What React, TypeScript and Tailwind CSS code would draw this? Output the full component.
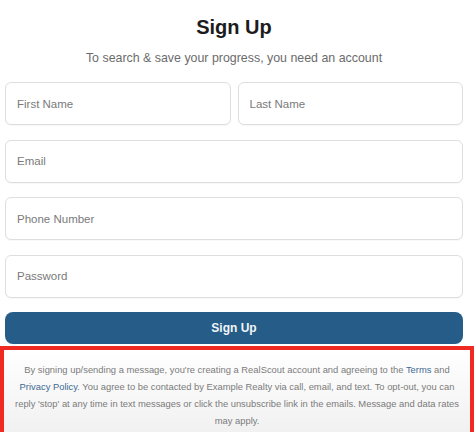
import React from 'react';

const fields = ['Email', 'Phone Number', 'Password'];

const Field: React.FC<{ label: string }> = ({ label }) => (
  <input
    placeholder={label}
    className="h-[43px] w-full rounded-[6px] border border-[#dedede] bg-white px-[11px] text-[11.5px] text-[#333] placeholder:text-[#7a7a7a] outline-none shadow-[0_1px_1px_rgba(0,0,0,0.03)]"
  />
);

const App: React.FC = () => {
  return (
    <div className="h-[432px] w-[474px] overflow-hidden bg-white font-['Liberation_Sans',Arial,sans-serif]">
      <div className="flex w-[458px] ml-[5px] flex-col">
        <h1 className="mt-[15px] h-[24px] text-center text-[20px] font-bold leading-[24px] text-[#1c1c1e]">
          Sign Up
        </h1>
        <p className="mt-[11px] text-center text-[12.4px] leading-[16px] text-[#6b6b6b]">
          To search &amp; save your progress, you need an account
        </p>

        <div className="mt-[16px] flex flex-col gap-[14.5px]">
          <div className="flex gap-[7px]">
            <Field label="First Name" />
            <Field label="Last Name" />
          </div>
          {fields.map((f) => (
            <Field key={f} label={f} />
          ))}
        </div>

        <button className="mt-[14px] h-[32px] w-full rounded-[8px] bg-[#255c88] text-[12px] font-bold text-[#f2f5f8]">
          Sign Up
        </button>
      </div>

      <div className="mt-[2px] h-[90px] w-[474px] border-[4px] border-[#ee2a22] bg-gradient-to-b from-white to-[#f1f1f1] pt-[11px]">
        <p className="whitespace-nowrap text-center text-[9.4px] leading-[17px] text-[#7b7b7b]">
          By signing up/sending a message, you're creating a RealScout account and agreeing to the{' '}
          <span className="text-[#3d6a94]">Terms</span> and
          <br />
          <span className="text-[#3d6a94]">Privacy Policy</span>. You agree to be contacted by Example Realty via call,
          email, and text. To opt-out, you can
          <br />
          reply 'stop' at any time in text messages or click the unsubscribe link in the emails. Message and data rates
          <br />
          may apply.
        </p>
      </div>
    </div>
  );
};

export default App;
